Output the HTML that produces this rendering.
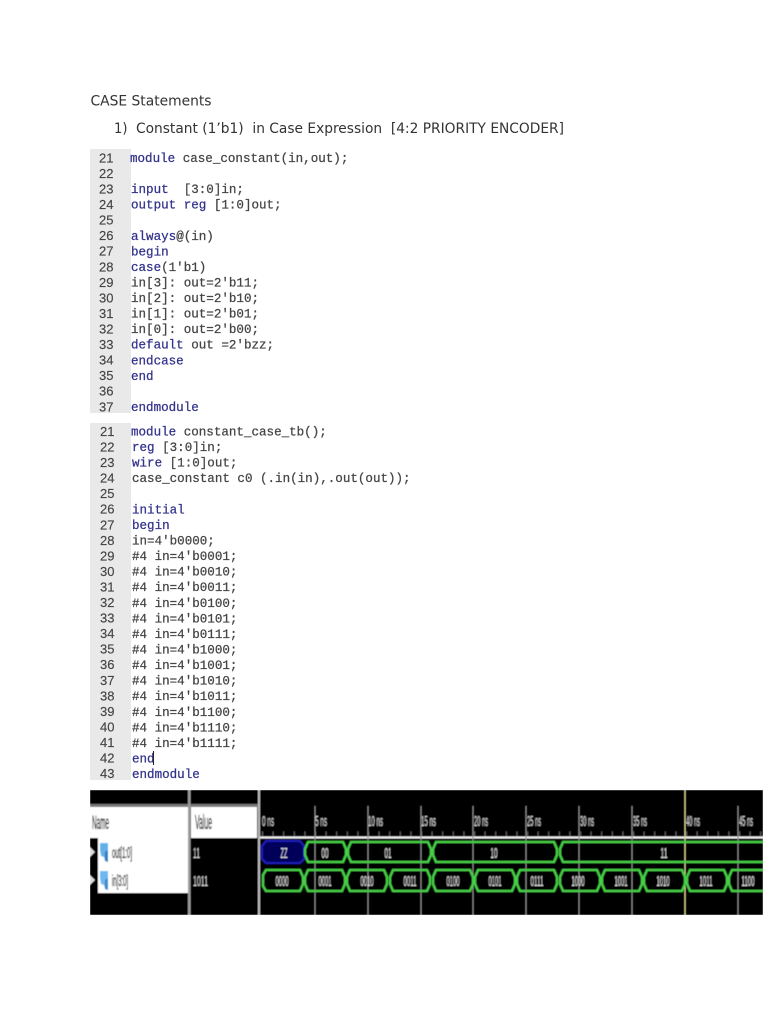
<!DOCTYPE html>
<html>
<head>
<meta charset="utf-8">
<style>
html,body{margin:0;padding:0;background:#fff;width:768px;height:1024px;overflow:hidden}
svg{display:block}
.h{font-family:"DejaVu Sans","Liberation Sans",sans-serif;font-size:14px;fill:#333}
.n{font-family:"Liberation Sans",sans-serif;font-size:13px;fill:#444;stroke:#444;stroke-width:.15}
.c{font-family:"Liberation Mono",monospace;font-size:12.55px;fill:#444;stroke:#444;stroke-width:.25}
.k{fill:#33338c;stroke:#33338c}
.bl{filter:url(#b1)}
.bus{fill:none;stroke:#46d046;stroke-width:2.3}
.wt{font-family:"Liberation Sans",sans-serif;font-size:15px;fill:#e8e8e8;text-anchor:middle}
.lb{font-family:"Liberation Sans",sans-serif;font-size:15px;fill:#ddd}
.dk{font-family:"Liberation Sans",sans-serif;fill:#111;stroke:#111;stroke-width:.35}
</style>
</head>
<body>
<svg width="768" height="1024" viewBox="0 0 768 1024" xmlns="http://www.w3.org/2000/svg">
<defs>
<filter id="b1" x="-2%" y="-2%" width="104%" height="104%"><feGaussianBlur stdDeviation="0.3"/></filter>
<filter id="b2" x="-2%" y="-2%" width="104%" height="104%"><feGaussianBlur stdDeviation="0.5"/></filter>
<clipPath id="wv"><rect x="90" y="790" width="673" height="125"/></clipPath>
</defs>
<rect width="768" height="1024" fill="#fff"/>

<text class="h" x="90.5" y="105.5" textLength="121" lengthAdjust="spacingAndGlyphs">CASE Statements</text>
<text class="h" x="114" y="133" textLength="13.5" lengthAdjust="spacingAndGlyphs">1)</text>
<text class="h" x="136" y="133" textLength="428" lengthAdjust="spacingAndGlyphs" xml:space="preserve">Constant (1’b1)  in Case Expression  [4:2 PRIORITY ENCODER]</text>

<!-- code block 1 -->
<rect x="90" y="149" width="41" height="264" fill="#e9e9e9"/>
<g class="bl">
<text class="n" x="99" y="162.5">21</text><text class="n" x="99" y="178">22</text><text class="n" x="99" y="193.5">23</text><text class="n" x="99" y="209">24</text><text class="n" x="99" y="224.5">25</text><text class="n" x="99" y="240">26</text><text class="n" x="99" y="255.5">27</text><text class="n" x="99" y="271.5">28</text><text class="n" x="99" y="287">29</text><text class="n" x="99" y="302.5">30</text><text class="n" x="99" y="318">31</text><text class="n" x="99" y="333.5">32</text><text class="n" x="99" y="349">33</text><text class="n" x="99" y="364.5">34</text><text class="n" x="99" y="380">35</text><text class="n" x="99" y="395.5">36</text><text class="n" x="99" y="411.5">37</text>
<text class="c" x="130" y="162"><tspan class="k">module</tspan> case_constant(in,out);</text>
<text class="c" x="131" y="193.1" xml:space="preserve"><tspan class="k">input</tspan>  [3:0]in;</text>
<text class="c" x="131" y="208.7"><tspan class="k">output reg</tspan> [1:0]out;</text>
<text class="c" x="131" y="239.8"><tspan class="k">always</tspan>@(in)</text>
<text class="c k" x="131" y="255.4">begin</text>
<text class="c" x="131" y="270.9"><tspan class="k">case</tspan>(1'b1)</text>
<text class="c" x="131" y="286.5">in[3]: out=2'b11;</text>
<text class="c" x="131" y="302">in[2]: out=2'b10;</text>
<text class="c" x="131" y="317.6">in[1]: out=2'b01;</text>
<text class="c" x="131" y="333.2">in[0]: out=2'b00;</text>
<text class="c" x="131" y="348.7"><tspan class="k">default</tspan> out =2'bzz;</text>
<text class="c k" x="131" y="364.3">endcase</text>
<text class="c k" x="131" y="379.8">end</text>
<text class="c k" x="131" y="411">endmodule</text>
</g>

<!-- code block 2 -->
<rect x="90" y="423" width="41" height="357" fill="#e9e9e9"/>
<g class="bl">
<text class="n" x="100" y="436">21</text><text class="n" x="100" y="451.5">22</text><text class="n" x="100" y="467">23</text><text class="n" x="100" y="482.5">24</text><text class="n" x="100" y="498">25</text><text class="n" x="100" y="513.5">26</text><text class="n" x="100" y="529.5">27</text><text class="n" x="100" y="545">28</text><text class="n" x="100" y="560.5">29</text><text class="n" x="100" y="576">30</text><text class="n" x="100" y="591.5">31</text><text class="n" x="100" y="607">32</text><text class="n" x="100" y="622.5">33</text><text class="n" x="100" y="638">34</text><text class="n" x="100" y="653.5">35</text><text class="n" x="100" y="669">36</text><text class="n" x="100" y="685">37</text><text class="n" x="100" y="700.5">38</text><text class="n" x="100" y="716">39</text><text class="n" x="100" y="731.5">40</text><text class="n" x="100" y="747">41</text><text class="n" x="100" y="762.5">42</text><text class="n" x="100" y="778">43</text>
<text class="c" x="131" y="435.5"><tspan class="k">module</tspan> constant_case_tb();</text>
<text class="c" x="132" y="451.1"><tspan class="k">reg</tspan> [3:0]in;</text>
<text class="c" x="132" y="466.6"><tspan class="k">wire</tspan> [1:0]out;</text>
<text class="c" x="132" y="482.2">case_constant c0 (.in(in),.out(out));</text>
<text class="c k" x="132" y="513.4">initial</text>
<text class="c k" x="132" y="528.9">begin</text>
<text class="c" x="132" y="544.5">in=4'b0000;</text>
<text class="c" x="132" y="560.1">#4 in=4'b0001;</text>
<text class="c" x="132" y="575.6">#4 in=4'b0010;</text>
<text class="c" x="132" y="591.2">#4 in=4'b0011;</text>
<text class="c" x="132" y="606.8">#4 in=4'b0100;</text>
<text class="c" x="132" y="622.3">#4 in=4'b0101;</text>
<text class="c" x="132" y="637.9">#4 in=4'b0111;</text>
<text class="c" x="132" y="653.5">#4 in=4'b1000;</text>
<text class="c" x="132" y="669.1">#4 in=4'b1001;</text>
<text class="c" x="132" y="684.6">#4 in=4'b1010;</text>
<text class="c" x="132" y="700.2">#4 in=4'b1011;</text>
<text class="c" x="132" y="715.8">#4 in=4'b1100;</text>
<text class="c" x="132" y="731.3">#4 in=4'b1110;</text>
<text class="c" x="132" y="746.9">#4 in=4'b1111;</text>
<text class="c k" x="132" y="762.5">end</text>
<rect x="153" y="751" width="1" height="14" fill="#222"/>
<text class="c k" x="132" y="778">endmodule</text>
</g>

<!-- waveform -->
<g clip-path="url(#wv)">
<g filter="url(#b2)">
<rect x="90" y="790" width="673" height="125" fill="#000"/>
<rect x="90" y="804" width="170" height="3" fill="#777"/>
<rect x="90" y="807" width="98" height="31" fill="#fff"/>
<rect x="98" y="838" width="90" height="55" fill="#fff"/>
<rect x="191" y="807" width="66" height="31" fill="#fff"/>
<rect x="188" y="790" width="2.5" height="125" fill="#999"/>
<rect x="258" y="790" width="2" height="125" fill="#bbb"/>
<path d="M90 847l5 5-5 5zM90 875l5 5-5 5z" fill="#ddd"/>

<path d="M100 843h8v19l-3-1-1-4-3-1-1-6z" fill="#62b0ea"/>
<path d="M105 852l3-2v12l-3-1z" fill="#2f7fc4"/>
<path d="M100 871h8v19l-3-1-1-4-3-1-1-6z" fill="#6db8ee"/>
<path d="M105 880l3-2v12l-3-1z" fill="#3a8acc"/>

<text class="dk" x="92" y="829" font-size="19" textLength="17" lengthAdjust="spacingAndGlyphs">Name</text>
<text class="dk" x="195" y="829" font-size="20" textLength="17" lengthAdjust="spacingAndGlyphs">Value</text>
<text class="dk" x="112" y="858" font-size="16" textLength="20" lengthAdjust="spacingAndGlyphs">out[1:0]</text>
<text class="dk" x="112" y="886" font-size="16" textLength="16" lengthAdjust="spacingAndGlyphs">in[3:0]</text>
<text class="lb" x="193" y="858" textLength="7" lengthAdjust="spacingAndGlyphs">11</text>
<text class="lb" x="193" y="886" textLength="15" lengthAdjust="spacingAndGlyphs">1011</text>

<!-- time labels -->
<text class="lb" x="262" y="826" textLength="12" lengthAdjust="spacingAndGlyphs">0 ns</text>
<text class="lb" x="315" y="826" textLength="12" lengthAdjust="spacingAndGlyphs">5 ns</text>
<text class="lb" x="368" y="826" textLength="15" lengthAdjust="spacingAndGlyphs">10 ns</text>
<text class="lb" x="421" y="826" textLength="15" lengthAdjust="spacingAndGlyphs">15 ns</text>
<text class="lb" x="474" y="826" textLength="14" lengthAdjust="spacingAndGlyphs">20 ns</text>
<text class="lb" x="527" y="826" textLength="14" lengthAdjust="spacingAndGlyphs">25 ns</text>
<text class="lb" x="580" y="826" textLength="14" lengthAdjust="spacingAndGlyphs">30 ns</text>
<text class="lb" x="633" y="826" textLength="14" lengthAdjust="spacingAndGlyphs">35 ns</text>
<text class="lb" x="686" y="826" textLength="14" lengthAdjust="spacingAndGlyphs">40 ns</text>
<text class="lb" x="739" y="826" textLength="14" lengthAdjust="spacingAndGlyphs">45 ns</text>
<line x1="262" y1="834" x2="763" y2="834" stroke="#666" stroke-width="5" stroke-dasharray="1 9.6"/>
<rect x="260" y="836.5" width="503" height="2" fill="#eee"/>

<!-- time lines -->
<path d="M315 806V915M368 806V915M421 806V915M473 806V915M526 806V915M579 806V915M632 806V915M738 806V915" stroke="#888" stroke-width="1"/>
<path d="M685 790V915" stroke="#d8d890" stroke-width="1"/>

<!-- row 1 -->
<path d="M266 841H300l4 5v13l-4 4H266l-4-4v-13z" fill="#06065a" stroke="#1c1cb4" stroke-width="2.2"/>
<path class="bus" d="M308 842H343l3 7v6l-3 7H308l-3-7v-6z"/>
<path class="bus" d="M351 842H428l3 7v6l-3 7H351l-3-7v-6z"/>
<path class="bus" d="M436 842H554l3 7v6l-3 7H436l-3-7v-6z"/>
<path class="bus" d="M775 842H563l-3 7v6l3 7H775"/>

<!-- row 2 -->
<path class="bus" d="M266 870H300l3 7v7l-3 7H266l-3-5v-11z"/>
<path class="bus" d="M308 870H342l3 7v7l-3 7H308l-3-7v-7z"/>
<path class="bus" d="M350 870H384l3 7v7l-3 7H350l-3-7v-7z"/>
<path class="bus" d="M393 870H427l3 7v7l-3 7H393l-3-7v-7z"/>
<path class="bus" d="M436 870H470l3 7v7l-3 7H436l-3-7v-7z"/>
<path class="bus" d="M478 870H512l3 7v7l-3 7H478l-3-7v-7z"/>
<path class="bus" d="M520 870H554l3 7v7l-3 7H520l-3-7v-7z"/>
<path class="bus" d="M563 870H597l3 7v7l-3 7H563l-3-7v-7z"/>
<path class="bus" d="M605 870H639l3 7v7l-3 7H605l-3-7v-7z"/>
<path class="bus" d="M647 870H682l3 7v7l-3 7H647l-3-7v-7z"/>
<path class="bus" d="M690 870H724l3 7v7l-3 7H690l-3-7v-7z"/>
<path class="bus" d="M775 870H732l-3 7v7l3 7H775"/>

<!-- values -->
<text class="wt" x="284" y="858" textLength="7" lengthAdjust="spacingAndGlyphs">ZZ</text>
<text class="wt" x="325" y="858" textLength="7" lengthAdjust="spacingAndGlyphs">00</text>
<text class="wt" x="388" y="858" textLength="7" lengthAdjust="spacingAndGlyphs">01</text>
<text class="wt" x="494" y="858" textLength="7" lengthAdjust="spacingAndGlyphs">10</text>
<text class="wt" x="664" y="858" textLength="7" lengthAdjust="spacingAndGlyphs">11</text>
<text class="wt" x="282" y="886" textLength="13" lengthAdjust="spacingAndGlyphs">0000</text>
<text class="wt" x="325" y="886" textLength="13" lengthAdjust="spacingAndGlyphs">0001</text>
<text class="wt" x="367" y="886" textLength="13" lengthAdjust="spacingAndGlyphs">0010</text>
<text class="wt" x="410" y="886" textLength="13" lengthAdjust="spacingAndGlyphs">0011</text>
<text class="wt" x="453" y="886" textLength="13" lengthAdjust="spacingAndGlyphs">0100</text>
<text class="wt" x="495" y="886" textLength="13" lengthAdjust="spacingAndGlyphs">0101</text>
<text class="wt" x="537" y="886" textLength="13" lengthAdjust="spacingAndGlyphs">0111</text>
<text class="wt" x="578" y="886" textLength="13" lengthAdjust="spacingAndGlyphs">1000</text>
<text class="wt" x="621" y="886" textLength="13" lengthAdjust="spacingAndGlyphs">1001</text>
<text class="wt" x="663" y="886" textLength="13" lengthAdjust="spacingAndGlyphs">1010</text>
<text class="wt" x="706" y="886" textLength="13" lengthAdjust="spacingAndGlyphs">1011</text>
<text class="wt" x="748" y="886" textLength="13" lengthAdjust="spacingAndGlyphs">1100</text>
</g>
</g>
</svg>
</body>
</html>
